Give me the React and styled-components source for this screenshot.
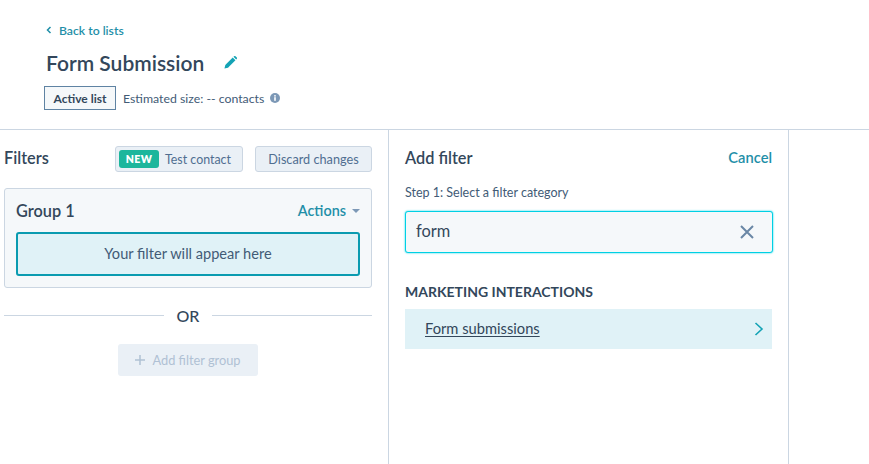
import React from 'react'
import styled, { createGlobalStyle } from 'styled-components'

const Global = createGlobalStyle`
  html, body { margin: 0; padding: 0; background: #fff; }
  body {
    font-family: Lato, "Open Sans", sans-serif;
    color: #33475b;
    -webkit-font-smoothing: antialiased;
  }
  * { box-sizing: border-box; }
`

const Page = styled.div`
  width: 869px;
  height: 464px;
  overflow: hidden;
`
const Header = styled.header`
  height: 130px;
  padding: 22px 0 0 44px;
  border-bottom: 1px solid #cbd6e2;
`
const BackLink = styled.a`
  display: flex;
  align-items: center;
  gap: 6px;
  height: 16px;
  padding-left: 2px;
  font-size: 12.2px;
  font-weight: 600;
  color: #1f8fa8;
`
const TitleRow = styled.div`
  display: flex;
  align-items: center;
  gap: 20px;
  height: 30px;
  margin-top: 9px;
  padding-left: 2px;
`
const Title = styled.h1`
  margin: 0;
  font-size: 21px;
  font-weight: 600;
  color: #33475b;
`
const StatusRow = styled.div`
  display: flex;
  align-items: center;
  gap: 7px;
  margin-top: 9px;
  font-size: 12.3px;
  color: #425b76;
`
const StatusTag = styled.span`
  display: flex;
  align-items: center;
  justify-content: center;
  width: 72px;
  height: 24px;
  background: #f5f8fa;
  border: 1px solid #5f83a3;
  font-size: 12px;
  font-weight: 700;
  color: #33475b;
`
const Estimate = styled.span`
  display: flex;
  align-items: center;
  gap: 6px;
`
const Columns = styled.div`
  display: flex;
  height: 334px;
`
const LeftPanel = styled.section`
  width: 389px;
  padding: 16px 16px 0 4px;
  border-right: 1px solid #cbd6e2;
`
const RightPanel = styled.section`
  width: 400px;
  padding: 19px 16px 0 16px;
  border-right: 1px solid #cbd6e2;
`
const FiltersBar = styled.div`
  display: flex;
  align-items: center;
  gap: 12px;
  height: 26px;
`
const PanelTitle = styled.h2`
  margin: 0 auto 3px 0;
  font-size: 16.3px;
  font-weight: 600;
  color: #33475b;
`
const GhostButton = styled.button`
  display: flex;
  align-items: center;
  justify-content: ${p => (p.$badged ? 'flex-start' : 'center')};
  gap: 6px;
  width: ${p => p.$width}px;
  height: 26px;
  padding: 0 0 0 ${p => (p.$badged ? 3 : 0)}px;
  background: #eaf0f6;
  border: 1px solid #cbd6e2;
  border-radius: 3px;
  font: inherit;
  font-size: ${p => (p.$badged ? 12.4 : 12.7)}px;
  color: #506e91;
`
const NewBadge = styled.span`
  display: flex;
  align-items: center;
  justify-content: center;
  width: 40px;
  height: 18px;
  background: #1cb69c;
  border-radius: 3px;
  font-size: 10.5px;
  font-weight: 800;
  letter-spacing: 0.4px;
  color: #fff;
`
const GroupCard = styled.div`
  height: 100px;
  margin-top: 16px;
  padding: 0 11px;
  background: #f5f8fa;
  border: 1px solid #cbd6e2;
  border-radius: 3px;
`
const GroupHead = styled.div`
  display: flex;
  align-items: center;
  justify-content: space-between;
  height: 43px;
`
const GroupName = styled.span`
  font-size: 16.3px;
  font-weight: 600;
  color: #33475b;
`
const ActionsLink = styled.span`
  display: flex;
  align-items: center;
  gap: 6px;
  font-size: 14.4px;
  font-weight: 600;
  color: #1f8fa8;
`
const Caret = styled.i`
  width: 0;
  height: 0;
  border-left: 4px solid transparent;
  border-right: 4px solid transparent;
  border-top: 4px solid #7c98b6;
`
const Placeholder = styled.div`
  display: flex;
  align-items: center;
  justify-content: center;
  height: 44px;
  padding-bottom: 2px;
  background: #e0f2f7;
  border: 2px solid #0a9bb0;
  border-radius: 3px;
  font-size: 14.6px;
  color: #425b76;
`
const OrDivider = styled.div`
  display: flex;
  align-items: center;
  gap: 13px;
  height: 20px;
  margin-top: 17px;
  font-size: 16px;
  font-weight: 500;
  color: #33475b;
  &::before, &::after {
    content: "";
    flex: 1;
    height: 1px;
    background: #cbd6e2;
  }
`
const AddGroupButton = styled.button`
  display: flex;
  align-items: center;
  justify-content: center;
  gap: 7px;
  width: 140px;
  height: 32px;
  margin: 19px auto 0;
  background: #eaf0f6;
  border: 0;
  border-radius: 3px;
  font: inherit;
  font-size: 12.8px;
  color: #b0c1d4;
`
const AddHead = styled.div`
  display: flex;
  align-items: center;
  justify-content: space-between;
  height: 20px;
`
const CancelLink = styled.a`
  margin-bottom: 4px;
  font-size: 14.7px;
  font-weight: 600;
  color: #1f8fa8;
`
const StepLabel = styled.div`
  margin-top: 16px;
  font-size: 12.5px;
  line-height: 16px;
  color: #425b76;
`
const SearchBox = styled.div`
  display: flex;
  align-items: center;
  justify-content: space-between;
  width: 368px;
  height: 42px;
  margin-top: 10px;
  padding: 0 18px 0 10px;
  background: #f5f8fa;
  border: 1.5px solid #00d0e4;
  border-radius: 3px;
  box-shadow: 0 0 2px #00d0e4;
  font-size: 16.4px;
  color: #33475b;
`
const SearchValue = styled.span`
  margin-bottom: 3px;
`
const SectionLabel = styled.h3`
  margin: 31px 0 0;
  font-size: 14px;
  line-height: 16px;
  font-weight: 700;
  color: #33475b;
`
const ResultRow = styled.div`
  display: flex;
  align-items: center;
  justify-content: space-between;
  width: 367px;
  height: 40px;
  margin-top: 9px;
  padding: 0 8px 0 20px;
  background: #e0f2f7;
  font-size: 14.7px;
  color: #33475b;
  span {
    margin-bottom: 3px;
    text-decoration: underline;
    text-underline-offset: 2px;
  }
`

const BackChevron = () => (
  <svg width="7" height="8" viewBox="0 0 7 8" fill="none" stroke="#1f8fa8" strokeWidth="1.5">
    <path d="M4.5 1 1.5 4l3 3" />
  </svg>
)

const RowChevron = () => (
  <svg width="10" height="14" viewBox="0 0 10 14" fill="none" stroke="#13a3b5" strokeWidth="1.6">
    <path d="M1.5 1 8 7l-6.5 6" />
  </svg>
)

const Pencil = () => (
  <svg width="13" height="13" viewBox="0 0 14 14" fill="#13a3b5">
    <path d="M0.5 13.5 1.4 9.7 9.4 1.7 12.3 4.6 4.3 12.6Z" />
    <path d="M10.2 0.9 11 0.2a1 1 0 0 1 1.3 0l1.5 1.5a1 1 0 0 1 0 1.3l-.7.8Z" />
  </svg>
)

const Info = () => (
  <svg width="10" height="10" viewBox="0 0 10 10">
    <circle cx="5" cy="5" r="5" fill="#7c98b6" />
    <rect x="4.2" y="4.2" width="1.6" height="3.6" fill="#fff" />
    <circle cx="5" cy="2.8" r="0.9" fill="#fff" />
  </svg>
)

const Cross = () => (
  <svg width="14" height="14" viewBox="0 0 14 14" stroke="#6a87a5" strokeWidth="2" fill="none">
    <path d="M1 1 13 13M13 1 1 13" />
  </svg>
)

const Plus = () => (
  <svg width="10" height="10" viewBox="0 0 10 10" stroke="#b0c1d4" strokeWidth="1.5" fill="none">
    <path d="M5 0v10M0 5h10" />
  </svg>
)

export default function App() {
  return (
    <Page>
      <Global />
      <Header>
        <BackLink>
          <BackChevron />
          Back to lists
        </BackLink>
        <TitleRow>
          <Title>Form Submission</Title>
          <Pencil />
        </TitleRow>
        <StatusRow>
          <StatusTag>Active list</StatusTag>
          <Estimate>Estimated size: -- contacts <Info /></Estimate>
        </StatusRow>
      </Header>
      <Columns>
        <LeftPanel>
          <FiltersBar>
            <PanelTitle>Filters</PanelTitle>
            <GhostButton $badged $width={128}><NewBadge>NEW</NewBadge>Test contact</GhostButton>
            <GhostButton $width={117}>Discard changes</GhostButton>
          </FiltersBar>
          <GroupCard>
            <GroupHead>
              <GroupName>Group 1</GroupName>
              <ActionsLink>Actions <Caret /></ActionsLink>
            </GroupHead>
            <Placeholder>Your filter will appear here</Placeholder>
          </GroupCard>
          <OrDivider>OR</OrDivider>
          <AddGroupButton><Plus />Add filter group</AddGroupButton>
        </LeftPanel>
        <RightPanel>
          <AddHead>
            <PanelTitle>Add filter</PanelTitle>
            <CancelLink>Cancel</CancelLink>
          </AddHead>
          <StepLabel>Step 1: Select a filter category</StepLabel>
          <SearchBox><SearchValue>form</SearchValue><Cross /></SearchBox>
          <SectionLabel>MARKETING INTERACTIONS</SectionLabel>
          <ResultRow>
            <span>Form submissions</span>
            <RowChevron />
          </ResultRow>
        </RightPanel>
      </Columns>
    </Page>
  )
}
